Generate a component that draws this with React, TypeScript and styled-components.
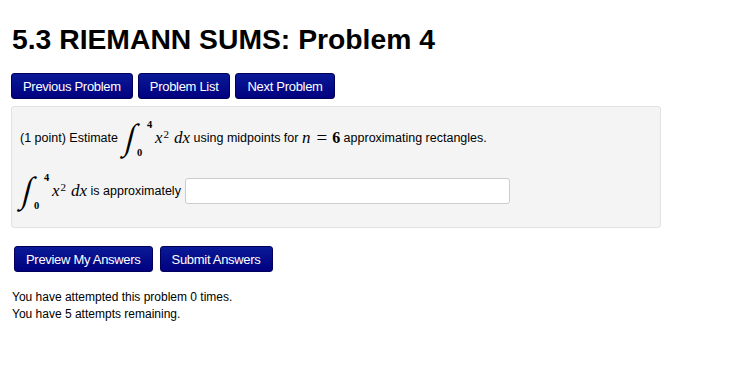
import React from "react";
import styled, { createGlobalStyle } from "styled-components";

const GlobalStyle = createGlobalStyle`
  body {
    margin: 0;
    background: #fff;
    font-family: "Liberation Sans", Arial, sans-serif;
    color: #000;
  }
`;

const Page = styled.div`
  padding: 21px 11px 0 11px;
`;

const Title = styled.h1`
  margin: 0 0 0 1px;
  font-size: 28.3px;
  font-weight: bold;
  line-height: 36px;
`;

const ButtonRow = styled.div<{ $gap: number; $top: number; $left?: number }>`
  display: flex;
  gap: ${(p) => p.$gap}px;
  margin-top: ${(p) => p.$top}px;
  margin-left: ${(p) => p.$left ?? 0}px;
`;

const NavButton = styled.button`
  height: 26px;
  padding: 0 11px;
  border: 1px solid #00005a;
  border-radius: 3px;
  background: linear-gradient(#0a1a96, #000080);
  color: #fff;
  font-family: "Liberation Sans", Arial, sans-serif;
  font-size: 13px;
  letter-spacing: -0.3px;
  cursor: pointer;
`;

const Panel = styled.div`
  margin-top: 7px;
  width: 650px;
  height: 122px;
  box-sizing: border-box;
  background: #f4f4f4;
  border: 1px solid #e2e2e2;
  border-radius: 3px;
  padding: 10px 8px;
  font-size: 12.5px;
`;

const Line = styled.div<{ $top?: number }>`
  display: flex;
  align-items: center;
  height: 42px;
  margin-top: ${(p) => p.$top ?? 0}px;
  white-space: pre;
`;

const IntegralBox = styled.span<{ $indent: number }>`
  position: relative;
  display: inline-flex;
  align-items: center;
  width: 30px;
  height: 42px;
  margin-left: ${(p) => p.$indent}px;
`;

const IntSign = styled.span`
  display: inline-block;
  margin-left: 1px;
  margin-top: -3px;
  font-family: "Liberation Serif", serif;
  font-size: 36px;
  line-height: 1;
  transform: skewX(-14deg) scaleX(0.85);
`;

const Limit = styled.span<{ $top: boolean }>`
  position: absolute;
  left: ${(p) => (p.$top ? 22 : 12)}px;
  ${(p) => (p.$top ? "top: 3px;" : "bottom: 1px;")}
  font-family: "Liberation Serif", serif;
  font-weight: bold;
  font-size: 10.5px;
  line-height: 1;
`;

const MathVar = styled.span<{ $gap?: number }>`
  margin-left: ${(p) => p.$gap ?? 0}px;
  font-family: "Liberation Serif", serif;
  font-style: italic;
  font-size: 17px;
`;

const MathOp = styled.span`
  margin: 0 5px 0 6px;
  font-family: "Liberation Serif", serif;
  font-size: 19px;
`;

const MathNum = styled.span`
  font-family: "Liberation Serif", serif;
  font-size: 16px;
  font-weight: bold;
`;

const Sup = styled.span`
  align-self: flex-start;
  margin-top: 11px;
  margin-left: 1px;
  font-family: "Liberation Serif", serif;
  font-size: 11px;
`;

const AnswerInput = styled.input`
  width: 325px;
  height: 26px;
  box-sizing: border-box;
  margin-left: 4px;
  border: 1px solid #cccccc;
  border-radius: 3px;
  background: #fff;
`;

const Info = styled.div`
  margin-top: 17px;
  margin-left: 1px;
  font-size: 12px;
  line-height: 17px;
`;

const Integral = ({ indent }: { indent: number }) => (
  <IntegralBox $indent={indent}>
    <IntSign>∫</IntSign>
    <Limit $top>4</Limit>
    <Limit $top={false}>0</Limit>
  </IntegralBox>
);

const Integrand = () => (
  <>
    <MathVar>x</MathVar>
    <Sup>2</Sup>
    <MathVar $gap={5}>dx</MathVar>
  </>
);

export default function App() {
  return (
    <Page>
      <GlobalStyle />
      <Title>5.3 RIEMANN SUMS: Problem 4</Title>
      <ButtonRow $gap={5} $top={16}>
        <NavButton>Previous Problem</NavButton>
        <NavButton>Problem List</NavButton>
        <NavButton>Next Problem</NavButton>
      </ButtonRow>
      <Panel>
        <Line>
          {"(1 point) Estimate"}
          <Integral indent={7} />
          <Integrand />
          {" using midpoints for "}
          <MathVar>n</MathVar>
          <MathOp>=</MathOp>
          <MathNum>6</MathNum>
          {" approximating rectangles."}
        </Line>
        <Line $top={11}>
          <Integral indent={2} />
          <Integrand />
          {" is approximately"}
          <AnswerInput />
        </Line>
      </Panel>
      <ButtonRow $gap={7} $top={18} $left={3}>
        <NavButton>Preview My Answers</NavButton>
        <NavButton>Submit Answers</NavButton>
      </ButtonRow>
      <Info>
        You have attempted this problem 0 times.
        <br />
        You have 5 attempts remaining.
      </Info>
    </Page>
  );
}
